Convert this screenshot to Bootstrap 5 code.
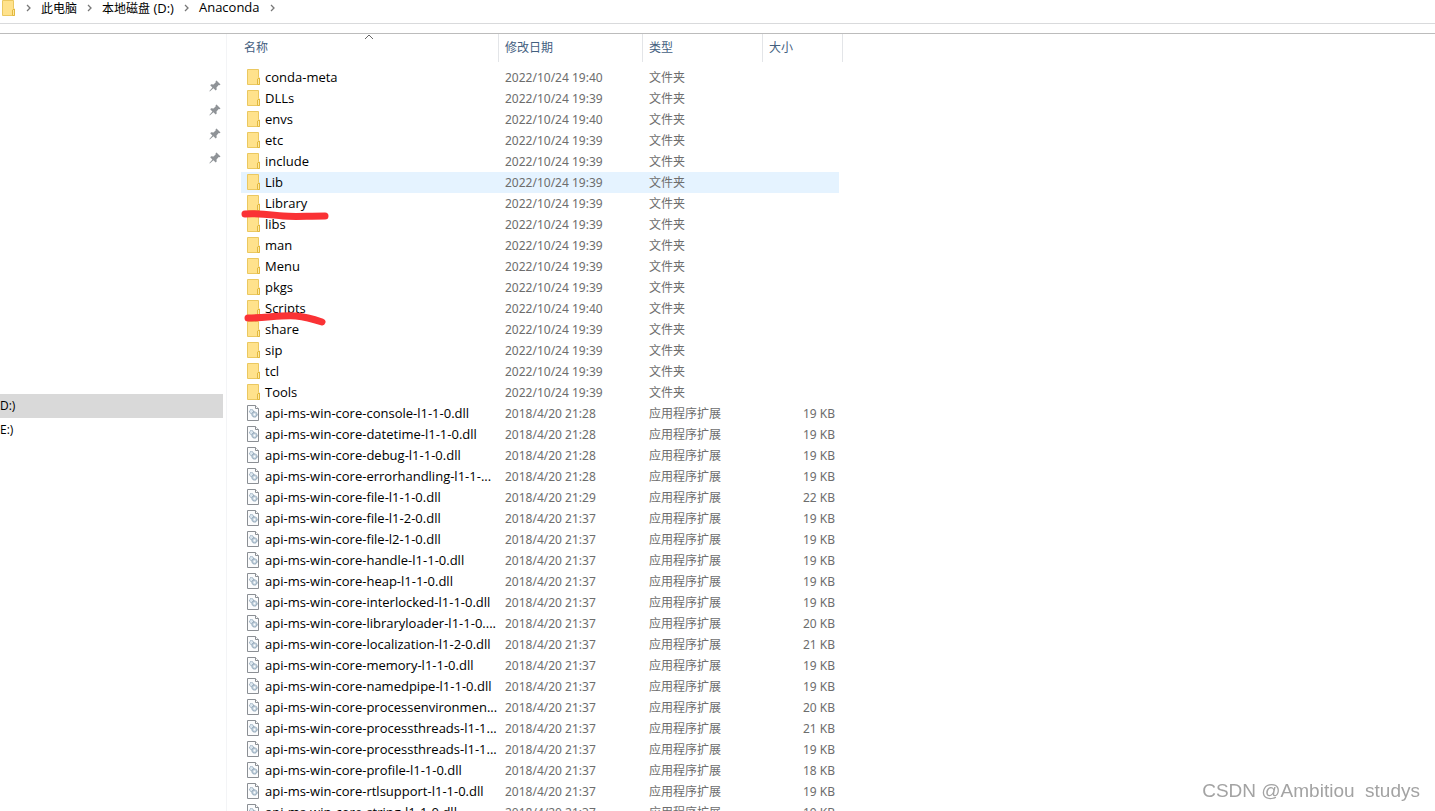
<!DOCTYPE html>
<html lang="zh-CN">
<head>
<meta charset="utf-8">
<meta name="viewport" content="width=device-width, initial-scale=1">
<title>Anaconda</title>
<link href="https://cdn.jsdelivr.net/npm/bootstrap@5.3.0/dist/css/bootstrap.min.css" rel="stylesheet">
<style>
body { font: 13px/21px "Open Sans", "Noto Sans CJK SC", sans-serif; color: #000; background: #fff; }
a { color: inherit; text-decoration: none; }
.zh { font-size: 12px; font-family: "Noto Sans CJK SC", sans-serif; }
.address { height: 24px; padding: 0 0 8px 2px; border-bottom: 1px solid #d9dadc; line-height: 15px; }
.address ol { gap: 10px; height: 15px; }
.address svg, .files svg, .side svg { display: block; }
.window { height: calc(100vh - 33px); margin-top: 9px; border-top: 1px solid #bcbcbc; }
.side { width: 227px; border-right: 1px solid #f3f4f6; padding: 40px 3px 0 0; font-size: 12px; line-height: 24px; }
.side li { height: 24px; }
.side .pinned { padding-right: 2px; margin-bottom: 224px; }
.side .active { background: #d9d9d9; }
.files { width: 602px; margin-left: 14px; table-layout: fixed; border-collapse: separate; border-spacing: 0; }
.files th { height: 28px; padding: 0 0 0 6px; font-weight: 400; color: #44607f; border-right: 1px solid #e3e5e8; line-height: 25px; vertical-align: top; }
.files th:first-child { padding-left: 3px; }
.files td { height: 21px; padding: 0 0 0 6px; line-height: 21px; color: #6d6d6d; white-space: nowrap; font-size: 12px; font-family: "Noto Sans", sans-serif; vertical-align: top; }
.files td:first-child { color: #000; font-size: 13px; font-family: "Open Sans", sans-serif; }
.files td.zh { font-family: "Noto Sans CJK SC", sans-serif; line-height: 19px; }
.files td:last-child { text-align: right; padding-right: 4px; border-right: 4px solid transparent; background-clip: padding-box; }
.files .item-icon { margin: 0 4px 1px 0; }
.files .gap-row td { height: 5px; padding: 0; line-height: 5px; }
.files .hover td { background-color: #e5f3ff; }
.sort { left: 123px; top: 0; }
.mark-line { left: 0; top: 14px; z-index: 1; pointer-events: none; }
.watermark { right: 15px; bottom: 8px; font: 19px/24px "Liberation Sans", sans-serif; color: #a3a3a3; white-space: pre; }
</style>
</head>
<body class="overflow-hidden">
<svg class="d-none">
  <symbol id="folder" viewBox="0 0 14 16"><path d="M.5.5h11v8l1 1v6H.5z" fill="#ffe28c" stroke="#ebc860"/><path d="M10.500 15.500V10l2-1v6.500z" fill="#ffe9a0" stroke="#e2b83e"/></symbol>
  <symbol id="dll" viewBox="0 0 14 16"><path d="M.5.5h8l3 3v12H.5z" fill="#fbfcfd" stroke="#8b8f94"/><path d="M8.500.5v3h3" fill="#fff" stroke="#8b8f94"/><circle cx="4.500" cy="6.500" r="2" fill="#dce7ef" stroke="#8ba2b5" stroke-dasharray="1.200 .5"/><circle cx="7.500" cy="9.500" r="2.600" fill="#c6d5e1" stroke="#7890a5" stroke-dasharray="1.400 .5"/><circle cx="7.500" cy="9.500" r=".9" fill="#fff"/></symbol>
  <symbol id="chev" viewBox="0 0 5 8"><path d="M1 1l3 3-3 3" fill="none" stroke="#777" stroke-width="1.300"/></symbol>
  <symbol id="pin" viewBox="0 0 12 12"><path d="M7.500.5l4 4-1 .8-.8-.2-2.200 2.300.2 2.200-1 1L4.400 8.300.8 11.400.4 11l3-3.600L1.200 5.200l1-1 2.300.2 2.300-2.200-.2-.9z" fill="#8f9397"/></symbol>
</svg>

<nav class="address" aria-label="地址">
  <ol class="list-unstyled d-flex align-items-center mb-0">
    <li><svg width="14" height="16"><use href="#folder"/></svg></li>
    <li><svg width="5" height="8"><use href="#chev"/></svg></li>
    <li><a href="#" class="zh">此电脑</a></li>
    <li><svg width="5" height="8"><use href="#chev"/></svg></li>
    <li><a href="#"><span class="zh">本地磁盘</span> (D:)</a></li>
    <li><svg width="5" height="8"><use href="#chev"/></svg></li>
    <li><a href="#">Anaconda</a></li>
    <li><svg width="5" height="8"><use href="#chev"/></svg></li>
  </ol>
</nav>

<div class="window d-flex overflow-hidden">
  <aside class="side flex-shrink-0">
    <ul class="list-unstyled pinned">
      <li class="d-flex align-items-center justify-content-end"><svg width="12" height="12"><use href="#pin"/></svg></li>
      <li class="d-flex align-items-center justify-content-end"><svg width="12" height="12"><use href="#pin"/></svg></li>
      <li class="d-flex align-items-center justify-content-end"><svg width="12" height="12"><use href="#pin"/></svg></li>
      <li class="d-flex align-items-center justify-content-end"><svg width="12" height="12"><use href="#pin"/></svg></li>
    </ul>
    <ul class="list-unstyled mb-0">
      <li class="active"><a href="#" class="d-block">D:)</a></li>
      <li><a href="#" class="d-block">E:)</a></li>
    </ul>
  </aside>
  <main class="flex-grow-1">
    <table class="files">
      <colgroup><col style="width:258px"><col style="width:144px"><col style="width:120px"><col style="width:80px"></colgroup>
      <thead>
        <tr class="zh">
          <th class="position-relative" scope="col">名称<svg class="sort position-absolute" width="10" height="6"><path d="M1 5l4-4 4 4" fill="none" stroke="#666"/></svg></th>
          <th scope="col">修改日期</th><th scope="col">类型</th><th scope="col">大小</th>
        </tr>
      </thead>
      <tbody id="rows"><tr class="gap-row"><td colspan="4"></td></tr></tbody>
    </table>
  </main>
</div>
<div class="watermark position-fixed">CSDN @Ambitiou  studys</div>

<script src="https://cdn.jsdelivr.net/npm/bootstrap@5.3.0/dist/js/bootstrap.bundle.min.js"></script>
<script>
const folders = [["conda-meta", 40], ["DLLs", 39], ["envs", 40], ["etc", 39], ["include", 39], ["Lib", 39], ["Library", 39], ["libs", 39],
  ["man", 39], ["Menu", 39], ["pkgs", 39], ["Scripts", 40], ["share", 39], ["sip", 39], ["tcl", 39], ["Tools", 39]];
const dlls = [["console-l1-1-0.dll", 28, 19], ["datetime-l1-1-0.dll", 28, 19], ["debug-l1-1-0.dll", 28, 19], ["errorhandling-l1-1-...", 28, 19],
  ["file-l1-1-0.dll", 29, 22], ["file-l1-2-0.dll", 37, 19], ["file-l2-1-0.dll", 37, 19], ["handle-l1-1-0.dll", 37, 19], ["heap-l1-1-0.dll", 37, 19],
  ["interlocked-l1-1-0.dll", 37, 19], ["libraryloader-l1-1-0....", 37, 20], ["localization-l1-2-0.dll", 37, 21], ["memory-l1-1-0.dll", 37, 19],
  ["namedpipe-l1-1-0.dll", 37, 19], ["processenvironmen...", 37, 20], ["processthreads-l1-1...", 37, 21], ["processthreads-l1-1...", 37, 19],
  ["profile-l1-1-0.dll", 37, 18], ["rtlsupport-l1-1-0.dll", 37, 19], ["string-l1-1-0.dll", 37, 19]];
const strokes = {
  Library: "M4 7C20 6 30 8 42 9S65 9 84 9",
  Scripts: "M7 6C25 6 40 3 55 4Q66 5 81 10"
};
const row = (icon, name, date, type, size) => {
  const mark = strokes[name] ? `<svg class="mark-line position-absolute" width="92" height="18"><path d="${strokes[name]}" fill="none" stroke="#fa3235" stroke-width="7" stroke-linecap="round"/></svg>` : "";
  return `<tr${name === "Lib" ? ' class="hover"' : ""}><td class="position-relative"><div class="d-flex align-items-center"><svg class="item-icon flex-shrink-0" width="14" height="16"><use href="#${icon}"/></svg><span>${name}</span></div>${mark}</td><td>${date}</td><td class="zh">${type}</td><td>${size}</td></tr>`;
};
document.getElementById("rows").insertAdjacentHTML("beforeend",
  folders.map(([n, m]) => row("folder", n, `2022/10/24 19:${m}`, "文件夹", "")).join("") +
  dlls.map(([n, m, s]) => row("dll", "api-ms-win-core-" + n, `2018/4/20 21:${m}`, "应用程序扩展", s + " KB")).join(""));
</script>
</body>
</html>
